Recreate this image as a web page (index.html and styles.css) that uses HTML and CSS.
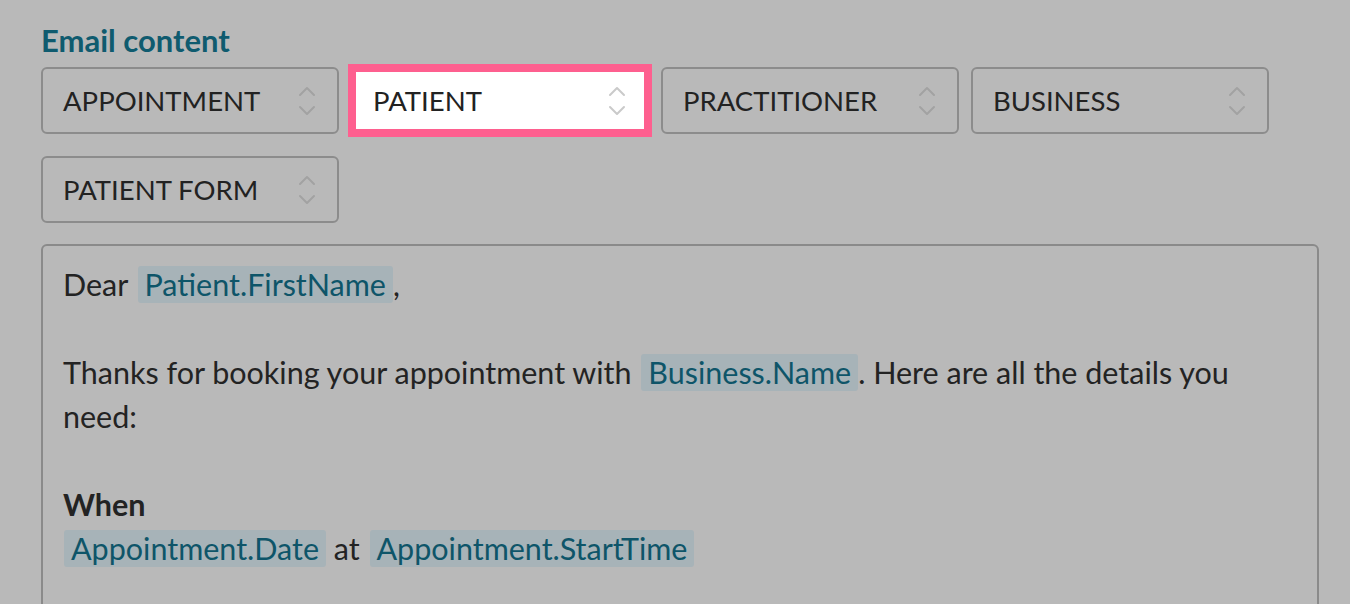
FILE: index.html
```html
<!DOCTYPE html>
<html lang="en">
<head>
<meta charset="utf-8">
<title>Email content</title>
<link rel="stylesheet" href="styles.css">
</head>
<body>
<main class="page">
  <h2 class="label">Email content</h2>
  <div class="selects">
    <div class="select"><span class="select-text">APPOINTMENT</span><svg class="chev" viewBox="0 0 18 34" width="18" height="34"><polyline points="2,11 9,4 16,11"/><polyline points="2,23 9,30 16,23"/></svg></div>
    <div class="select is-active"><span class="select-text">PATIENT</span><svg class="chev" viewBox="0 0 18 34" width="18" height="34"><polyline points="2,11 9,4 16,11"/><polyline points="2,23 9,30 16,23"/></svg></div>
    <div class="select"><span class="select-text">PRACTITIONER</span><svg class="chev" viewBox="0 0 18 34" width="18" height="34"><polyline points="2,11 9,4 16,11"/><polyline points="2,23 9,30 16,23"/></svg></div>
    <div class="select"><span class="select-text">BUSINESS</span><svg class="chev" viewBox="0 0 18 34" width="18" height="34"><polyline points="2,11 9,4 16,11"/><polyline points="2,23 9,30 16,23"/></svg></div>
    <div class="select"><span class="select-text">PATIENT FORM</span><svg class="chev" viewBox="0 0 18 34" width="18" height="34"><polyline points="2,11 9,4 16,11"/><polyline points="2,23 9,30 16,23"/></svg></div>
  </div>
  <div class="editor">
    <p>Dear <span class="chip">Patient.FirstName</span>,</p>
    <p>Thanks for booking your appointment with <span class="chip">Business.Name</span>. Here are all the details you need:</p>
    <p><strong>When</strong><br><span class="chip chip-first">Appointment.Date</span> at <span class="chip">Appointment.StartTime</span></p>
  </div>
</main>
</body>
</html>
```

FILE: styles.css
```css
html, body {
  margin: 0;
  padding: 0;
  background: #b9b9b9;
  height: 100%;
  overflow: hidden;
}

body {
  font-family: Lato, "Liberation Sans", sans-serif;
  color: #232323;
}

.page {
  padding: 22px 31px 0 41px;
}

.label {
  margin: 0;
  font-size: 31px;
  line-height: 36px;
  font-weight: 700;
  color: #0f5b6f;
}

.selects {
  margin-top: 9px;
  display: flex;
  flex-wrap: wrap;
  column-gap: 12px;
  row-gap: 22px;
  width: 1240px;
}

.select {
  box-sizing: border-box;
  width: 298px;
  height: 67px;
  border: 2px solid #8c8c8c;
  border-radius: 6px;
  display: flex;
  align-items: center;
  justify-content: space-between;
  padding: 0 21px 0 20px;
  font-size: 27.5px;
  color: #222;
}

.select.is-active {
  background: #fff;
  border-color: #fe5f8f;
  border-radius: 0;
  outline: 3px solid #fe5f8f;
  border-width: 5px;
  padding-left: 17px;
  padding-right: 18px;
}

.chev {
  display: block;
  fill: none;
  stroke: #a2a2a2;
  stroke-width: 2;
  stroke-linecap: round;
  stroke-linejoin: round;
}

.is-active .chev {
  stroke: #cacaca;
}

.editor {
  margin-top: 21px;
  border: 2px solid #8a8a8a;
  border-radius: 6px;
  padding: 16px 20px 40px 20px;
  font-size: 30.5px;
  line-height: 44px;
}

.editor p {
  margin: 0 0 44px 0;
}

.editor strong {
  font-weight: 700;
}

.chip {
  display: inline-block;
  background: #a7b3b8;
  color: #0e5569;
  border-radius: 3px;
  padding: 0 7px;
  line-height: 37px;
  margin-left: 2px;
}

.chip-first {
  margin-left: 1px;
}
```
